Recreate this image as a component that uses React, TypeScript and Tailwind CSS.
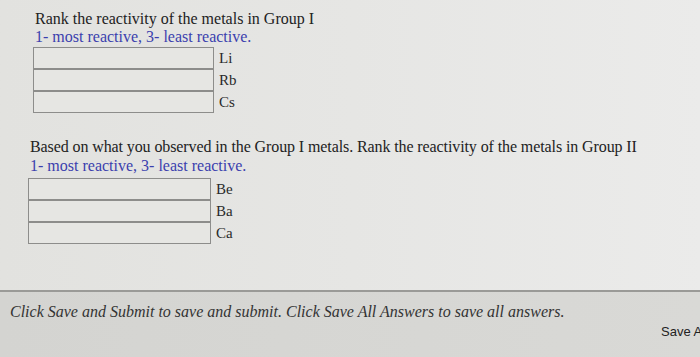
import React from "react";

const serif = { fontFamily: '"Liberation Serif", "Times New Roman", serif' };

function RankBlock({ labels, width }: { labels: string[]; width: string }) {
  return (
    <div className="flex flex-col">
      {labels.map((l) => (
        <div key={l} className="flex items-center">
          <div className={`${width} h-[22px] border border-[#8d8d8b] bg-[#e6e6e3] -mt-px first:mt-0`} />
          <span className="ml-[5px] text-[15px] leading-none text-[#2a2a2a]">{l}</span>
        </div>
      ))}
    </div>
  );
}

export default function App() {
  return (
    <div className="w-[700px] h-[357px] overflow-hidden flex flex-col bg-gradient-to-r from-[#e2e2df] via-[#e6e6e4] to-[#ebebea]">
      <div className="flex-1 flex flex-col" style={serif}>
        <div className="pl-[35px] pt-[10px]">
          <p className="text-[16px] leading-[18px] text-[#222]">Rank the reactivity of the metals in Group I</p>
          <p className="text-[16px] leading-[18px] text-[#3b3fae]">1- most reactive, 3- least reactive.</p>
          <div className="mt-[1px] -ml-[2px]">
            <RankBlock labels={["Li", "Rb", "Cs"]} width="w-[181px]" />
          </div>
        </div>
        <div className="pl-[30px] pt-[24px]">
          <p className="text-[16px] leading-[20px] text-[#222] tracking-[-0.1px]">
            Based on what you observed in the Group I metals. Rank the reactivity of the metals in Group II
          </p>
          <p className="text-[16px] leading-[18px] text-[#3b3fae]">1- most reactive, 3- least reactive.</p>
          <div className="mt-[3px] -ml-[2px]">
            <RankBlock labels={["Be", "Ba", "Ca"]} width="w-[183px]" />
          </div>
        </div>
      </div>
      <div className="h-[67px] border-t-2 border-[#9a9a97] bg-gradient-to-r from-[#d4d4d1] to-[#d9d9d6] flex flex-col">
        <p
          className="pl-[10px] pt-[12px] text-[16px] leading-[16px] italic text-[#333]"
          style={serif}
        >
          Click Save and Submit to save and submit. Click Save All Answers to save all answers.
        </p>
        <div className="flex justify-end pt-[2px]">
          <span
            className="text-[13px] text-[#222] whitespace-nowrap -mr-[8px]"
            style={{ fontFamily: '"Liberation Sans", Arial, sans-serif' }}
          >
            Save All
          </span>
        </div>
      </div>
    </div>
  );
}
